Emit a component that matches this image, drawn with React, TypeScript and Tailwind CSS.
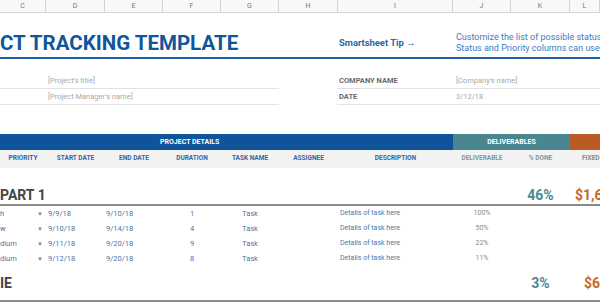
import React from 'react';

const cols = 'grid grid-cols-[46px_59px_58px_58px_58px_59px_115px_58px_59px_1fr]';

const letters = ['C', 'D', 'E', 'F', 'G', 'H', 'I', 'J', 'K', 'L'];

const tasks = [
  { pr: 'h', start: '9/9/18', end: '9/10/18', dur: '1', pct: '100%' },
  { pr: 'w', start: '9/10/18', end: '9/14/18', dur: '4', pct: '50%' },
  { pr: 'dium', start: '9/11/18', end: '9/20/18', dur: '9', pct: '22%' },
  { pr: 'dium', start: '9/12/18', end: '9/20/18', dur: '8', pct: '11%' },
];

export default function App() {
  return (
    <div className="w-[600px] h-[303px] overflow-hidden bg-white font-['Roboto',_'Liberation_Sans',_sans-serif]">
      {/* sheet column letters */}
      <div className={`${cols} h-[13px] bg-[#f8f8f8] border-b border-[#d4d4d4]`}>
        {letters.map((l) => (
          <div key={l} className="border-r border-[#d4d4d4] flex items-center justify-center text-[7px] text-[#777]">
            {l}
          </div>
        ))}
      </div>

      {/* title band */}
      <div className="h-[46px] border-b-2 border-[#1d5ea8] flex items-start overflow-hidden">
        <div className="w-[338px] shrink-0 pt-[18px] text-[20.5px] leading-[24px] font-bold text-[#11559b] whitespace-nowrap">
          CT TRACKING TEMPLATE
        </div>
        <div className="w-[115px] shrink-0 pt-[24px] pl-[1px] text-[9.4px] leading-[12px] font-bold text-[#2e67a5] whitespace-nowrap">
          Smartsheet Tip <span className="font-black">→</span>
        </div>
        <div className="shrink-0 pt-[19px] pl-[3px] text-[9px] leading-[11px] text-[#3a7cc2] whitespace-nowrap">
          <div>Customize the list of possible statuses displayed in the</div>
          <div>Status and Priority columns can use symbols as well.</div>
        </div>
      </div>

      {/* project info */}
      <div className="flex pt-[15px]">
        <div className="w-[279px] text-[7.5px]">
          <div className="h-[15px] border-b border-[#e2e2e2] flex items-center pl-[48px] text-[#a8a8a8]">[Project's title]</div>
          <div className="h-[16px] border-b border-[#e2e2e2] flex items-center pl-[48px] text-[#a8a8a8]">[Project Manager's name]</div>
        </div>
        <div className="w-[58px]" />
        <div className="flex-1 text-[7.5px]">
          <div className="h-[15px] border-b border-[#e2e2e2] flex items-center">
            <span className="w-[119px] pl-[2px] font-bold text-[#6a6a6a]">COMPANY NAME</span>
            <span className="text-[#a8a8a8]">[Company's name]</span>
          </div>
          <div className="h-[16px] border-b border-[#e2e2e2] flex items-center">
            <span className="w-[119px] pl-[2px] font-bold text-[#6a6a6a]">DATE</span>
            <span className="text-[#a8a8a8]">3/12/18</span>
          </div>
        </div>
      </div>

      {/* section bands */}
      <div className="mt-[29px] flex h-[16px] text-[7px] font-bold text-white">
        <div className="w-[453px] bg-[#0f5499] flex items-center pl-[160px]">PROJECT DETAILS</div>
        <div className="w-[117px] bg-[#4a8690] flex items-center justify-center">DELIVERABLES</div>
        <div className="flex-1 bg-[#b95c24]" />
      </div>

      {/* column headers */}
      <div className={`${cols} h-[18px] bg-[#f2f2f2] text-[6.5px] font-bold items-center whitespace-nowrap`}>
        <div className="text-center text-[#3466a3]">PRIORITY</div>
        <div className="text-center text-[#3466a3]">START DATE</div>
        <div className="text-center text-[#3466a3]">END DATE</div>
        <div className="text-center text-[#3466a3]">DURATION</div>
        <div className="text-center text-[#3466a3]">TASK NAME</div>
        <div className="text-center text-[#3466a3]">ASSIGNEE</div>
        <div className="text-center text-[#3466a3]">DESCRIPTION</div>
        <div className="text-center text-[#7a9aa2]">DELIVERABLE</div>
        <div className="text-center text-[#7a9aa2]">% DONE</div>
        <div className="pl-[12px] text-[#8a8a8a]">FIXED</div>
      </div>

      {/* part 1 */}
      <div className={`${cols} h-[38px] border-b-2 border-[#8a8a8a] items-end pb-[1px] text-[14px] leading-[16px] font-bold`}>
        <div className="col-span-7 text-[#454545]">PART 1</div>
        <div />
        <div className="text-center text-[#4b8994]">46%</div>
        <div className="pl-[5px] text-[#c4672b] whitespace-nowrap">$1,640.00</div>
      </div>

      {tasks.map((t, i) => (
        <div key={i} className={`${cols} h-[15px] items-center text-[7px] text-[#4a76aa] whitespace-nowrap`}>
          <div className="flex items-center justify-between pr-[3px] text-[7.5px]">
            <span>{t.pr}</span>
            <span className="text-[6px] text-[#888]">▼</span>
          </div>
          <div className="pl-[2px] text-[7.5px]">{t.start}</div>
          <div className="pl-[1px] text-[7.5px]">{t.end}</div>
          <div className="text-center text-[7.5px]">{t.dur}</div>
          <div className="text-center text-[7.5px]">Task</div>
          <div />
          <div className="pl-[2px]">Details of task here</div>
          <div className="text-center text-[#8a8a8a]">{t.pct}</div>
          <div />
          <div />
        </div>
      ))}

      {/* part 2 */}
      <div className={`${cols} h-[36px] border-b-2 border-[#8a8a8a] items-end pb-[9px] text-[14px] leading-[16px] font-bold`}>
        <div className="col-span-7 text-[#454545]">IE</div>
        <div />
        <div className="text-center text-[#4b8994]">3%</div>
        <div className="pl-[14px] text-[#c4672b] whitespace-nowrap">$690.00</div>
      </div>
    </div>
  );
}
